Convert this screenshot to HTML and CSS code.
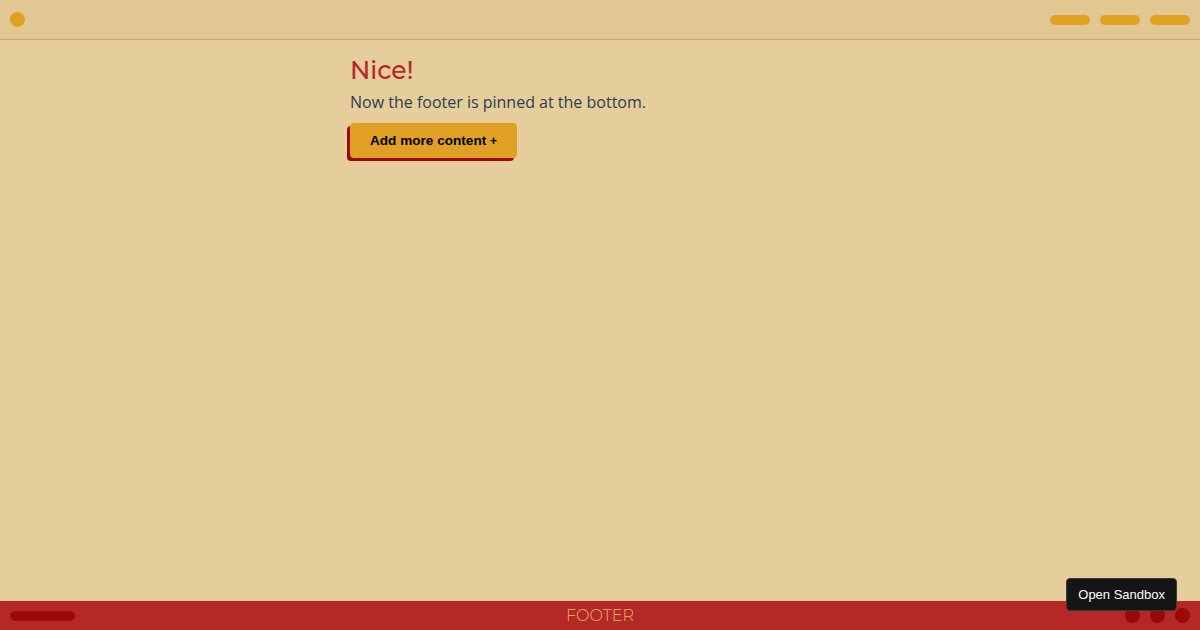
FILE: index.html
```html
<!DOCTYPE html>
<html lang="en">
<head>
    <meta charset="UTF-8">
    <meta name="viewport" content="width=device-width, initial-scale=1.0">
    <title>Sticky footer</title>
    <link rel="stylesheet" href="styles.css">
</head>
<body>

    <header class="header">
        <div class="logo"></div>
        <nav class="nav">
            <span class="nav-item"></span>
            <span class="nav-item"></span>
            <span class="nav-item"></span>
        </nav>
    </header>

    <main class="main">
        <div class="content">
            <h1>Nice!</h1>
            <p>Now the footer is pinned at the bottom.</p>
            <button class="add-button">Add more content <span class="plus">+</span></button>
        </div>
    </main>

    <footer class="footer">
        <span class="footer-bar"></span>
        <span class="footer-title">FOOTER</span>
        <div class="footer-dots">
            <span class="dot"></span>
            <span class="dot"></span>
            <span class="dot"></span>
        </div>
    </footer>

    <a class="sandbox-link">Open Sandbox</a>

</body>
</html>
```

FILE: styles.css
```css
/* 기본 스타일 */
* {
    box-sizing: border-box;
}

body {
    margin: 0;
    min-height: 100vh;
    display: flex;
    flex-direction: column;
    background-color: #e5cd9c;
    font-family: 'Open Sans', sans-serif;
}

.header {
    height: 40px;
    display: flex;
    align-items: center;
    justify-content: space-between;
    padding: 0 10px;
    background-color: #e2c792;
    border-bottom: 1px solid #c9a66b;
}

.logo {
    width: 15px;
    height: 15px;
    border-radius: 50%;
    background-color: #e0a024;
}

.nav {
    display: flex;
    gap: 10px;
}

.nav-item {
    width: 40px;
    height: 10px;
    border-radius: 5px;
    background-color: #e0a024;
}

.main {
    flex: 1;
}

.content {
    width: 500px;
    margin: 0 auto;
    padding-top: 14px;
}

.content h1 {
    margin: 0;
    color: #b52828;
    font-family: 'Montserrat', 'Lato', sans-serif;
    font-weight: 500;
    font-size: 25px;
    line-height: 32px;
}

.content p {
    margin: 4px 0 9px;
    color: #2c3e50;
    font-size: 16px;
    line-height: 24px;
}

.add-button {
    width: 167px;
    height: 35px;
    border: none;
    border-radius: 4px;
    background-color: #e0a024;
    box-shadow: -3px 3px 0 #9a0808;
    color: #000;
    font-family: 'Liberation Sans', Arial, sans-serif;
    font-weight: bold;
    font-size: 13.6px;
    cursor: pointer;
}

.plus {
    font-size: 12px;
}

.footer {
    height: 29px;
    display: flex;
    align-items: center;
    justify-content: space-between;
    padding: 0 10px;
    background-color: #b52828;
}

.footer-bar {
    width: 65px;
    height: 10px;
    border-radius: 5px;
    background-color: #9a0808;
}

.footer-title {
    color: #e9b45c;
    font-family: 'Montserrat', 'Lato', sans-serif;
    font-size: 16px;
    font-weight: 300;
}

.footer-dots {
    display: flex;
    gap: 10px;
}

.dot {
    width: 15px;
    height: 15px;
    border-radius: 50%;
    background-color: #9a0808;
}

.sandbox-link {
    position: fixed;
    right: 23px;
    bottom: 19px;
    padding: 8px 11px;
    border: 1px solid #3a3a3a;
    border-radius: 4px;
    background-color: #151515;
    color: #fff;
    font-family: 'Liberation Sans', Arial, sans-serif;
    font-size: 13px;
    line-height: 15px;
}
```
